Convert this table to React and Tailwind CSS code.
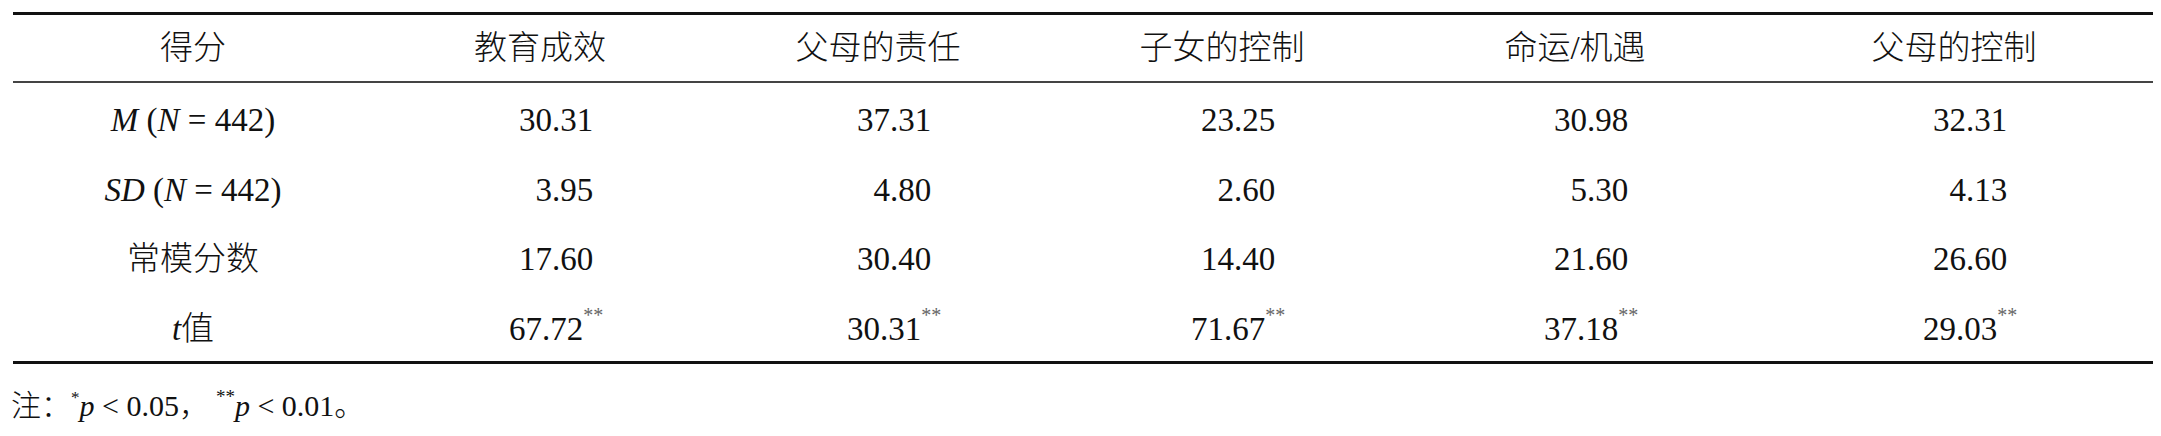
import React from "react";

const cols = "grid grid-cols-[360px_334px_342px_346px_360px_398px]";

function Star() {
  return <span className="relative -top-[18px] text-[20px] text-[#666]">**</span>;
}

function Pad() {
  return <span className="invisible">0</span>;
}

function C({ children }) {
  return <span className="font-light">{children}</span>;
}

const headers = ["得分", "教育成效", "父母的责任", "子女的控制", "命运/机遇", "父母的控制"];

const rows = [
  {
    label: (
      <>
        <i>M</i> (<i>N</i> = 442)
      </>
    ),
    vals: ["30.31", "37.31", "23.25", "30.98", "32.31"].map((v) => <>{v}</>),
  },
  {
    label: (
      <>
        <i>SD</i> (<i>N</i> = 442)
      </>
    ),
    vals: ["3.95", "4.80", "2.60", "5.30", "4.13"].map((v) => (
      <>
        <Pad />
        {v}
      </>
    )),
  },
  {
    label: <C>常模分数</C>,
    vals: ["17.60", "30.40", "14.40", "21.60", "26.60"].map((v) => <>{v}</>),
  },
  {
    label: (
      <>
        <i>t</i>
        <C>值</C>
      </>
    ),
    vals: ["67.72", "30.31", "71.67", "37.18", "29.03"].map((v) => (
      <>
        {v}
        <Star />
      </>
    )),
  },
];

export default function App() {
  return (
    <div className="w-[2161px] h-[436px] bg-white pt-[12px] px-[13px] text-[#111] font-['Liberation_Serif','Noto_Sans_CJK_SC',serif]">
      <div className="w-[2140px] border-t-[3px] border-b-[3px] border-[#111]">
        <div className={`${cols} h-[68px] items-center text-center text-[33px] border-b-2 border-[#444]`}>
          {headers.map((h, i) => (
            <div key={i} className="leading-none">
              <C>{h}</C>
            </div>
          ))}
        </div>
        {rows.map((r, ri) => (
          <div key={ri} className={`${cols} h-[69.5px] items-center text-center text-[33px]`}>
            <div className="leading-none whitespace-nowrap pt-[6px]">{r.label}</div>
            {r.vals.map((v, vi) => (
              <div key={vi} className="leading-none whitespace-nowrap pl-[32px] pt-[6px]">
                {v}
              </div>
            ))}
          </div>
        ))}
      </div>
      <div className="mt-[25px] -ml-[2px] text-[30px] leading-[34px] whitespace-nowrap">
        <C>注：</C>
        <span className="relative -top-[13px] text-[17px]">*</span>
        <i>p</i> &lt; 0.05<C>，</C>
        <span className="relative -top-[13px] ml-[7px] text-[19px]">**</span>
        <i>p</i> &lt; 0.01<C>。</C>
      </div>
    </div>
  );
}
